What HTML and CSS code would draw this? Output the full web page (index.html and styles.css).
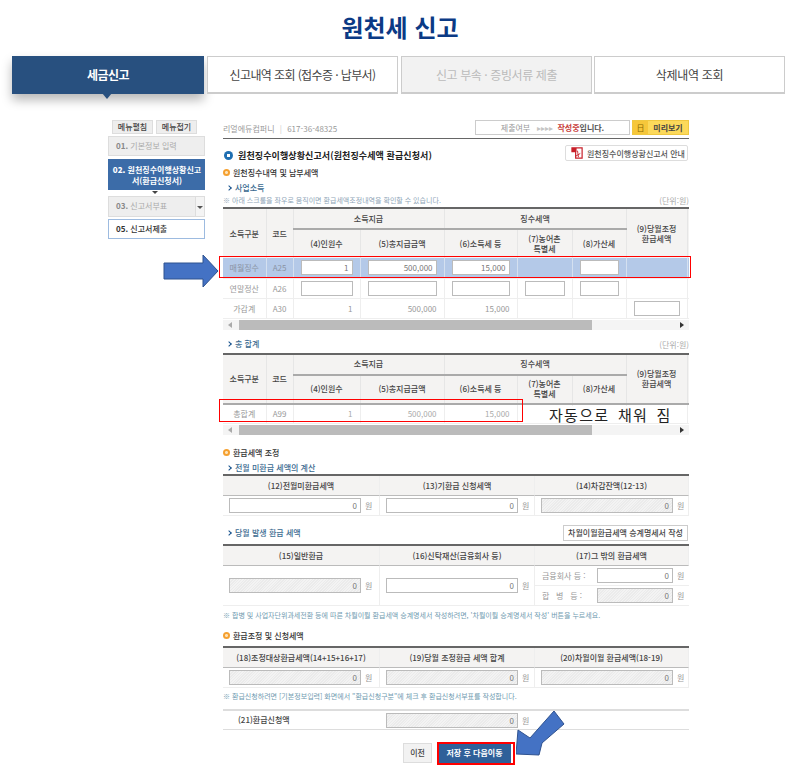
FILE: index.html
```html
<!DOCTYPE html>
<html lang="ko">
<head>
<meta charset="utf-8">
<title>원천세 신고</title>
<link rel="stylesheet" href="styles.css">
</head>
<body>
<div class="page">
  <h1 class="title">원천세 신고</h1>
  <nav class="tabs">
    <a class="tab tab-on">세금신고</a>
    <a class="tab">신고내역 조회 (접수증 · 납부서)</a>
    <a class="tab tab-off">신고 부속 · 증빙서류 제출</a>
    <a class="tab">삭제내역 조회</a>
  </nav>
  <div class="main">
    <aside class="side">
      <div class="side-btns"><span class="side-btn">메뉴펼침</span><span class="side-btn">메뉴접기</span></div>
      <div class="step"><b>01.</b> 기본정보 입력</div>
      <div class="step step-on"><b>02.</b> 원천징수이행상황신고서(환급신청서)</div>
      <div class="caret"></div>
      <div class="step-row"><div class="step step-grow"><b>03.</b> 신고서부표</div><span class="step-drop"></span></div>
      <div class="step step-white"><b>05.</b> 신고서제출</div>
    </aside>
    <section class="content">
      <div class="topbar">
        <span class="company">리얼에듀컴퍼니 <i>|</i> 617-36-48325</span>
        <span class="status">제출여부 &nbsp; <u>▸▸▸▸</u> &nbsp;<em>작성중</em><b>입니다.</b></span>
        <span class="preview"><span class="preview-ic">日</span><span class="preview-tx">미리보기</span></span>
      </div>
      <div class="form-head">
        <h2 class="form-title"><span class="dot-blue"></span>원천징수이행상황신고서(원천징수세액 환급신청서)</h2>
        <span class="guide">
          <svg class="pdf" viewBox="0 0 14 13"><path d="M1 1h11v11H5V5H1z" fill="#fff" stroke="#c8202a" stroke-width="1.3"/><path d="M1 1h5v4H1z" fill="#c8202a"/><path d="M7 4l1 7M5 10l5-3" stroke="#c8202a" fill="none"/></svg>
          원천징수이행상황신고서 안내</span>
      </div>
      <h3 class="h-orange sec1"><span class="dot-orange"></span>원천징수내역 및 납부세액</h3>
      <h4 class="h-sub">사업소득</h4>
      <div class="note-row"><p class="note">※ 아래 스크롤을 좌우로 움직이면 환급세액조정내역을 확인할 수 있습니다.</p><span class="unit">(단위:원)</span></div>

      <div class="tbl-wrap">
        <table class="grid">
          <colgroup><col class="c1"><col class="c2"><col class="c3"><col class="c4"><col class="c5"><col class="c6"><col class="c7"><col class="c8"><col class="c9"></colgroup>
          <thead>
            <tr class="h1"><th rowspan="2">소득구분</th><th rowspan="2">코드</th><th colspan="2" class="line">소득지급</th><th colspan="3" class="line">징수세액</th><th rowspan="2">(9)당월조정<br>환급세액</th><th rowspan="2"></th></tr>
            <tr class="h2"><th>(4)인원수</th><th>(5)총지급금액</th><th>(6)소득세 등</th><th>(7)농어촌<br>특별세</th><th>(8)가산세</th></tr>
          </thead>
          <tbody>
            <tr class="r sel"><td class="c">매월징수</td><td class="c">A25</td><td><input class="in" value="1"></td><td><input class="in" value="500,000"></td><td><input class="in" value="15,000"></td><td></td><td><input class="in"></td><td></td><td class="sl"></td></tr>
            <tr class="r"><td class="c">연말정산</td><td class="c">A26</td><td><input class="in"></td><td><input class="in"></td><td><input class="in"></td><td><input class="in"></td><td><input class="in"></td><td></td><td class="sl"></td></tr>
            <tr class="r"><td class="c">가감계</td><td class="c">A30</td><td class="n">1</td><td class="n">500,000</td><td class="n">15,000</td><td></td><td></td><td><input class="in"></td><td class="sl"></td></tr>
          </tbody>
        </table>
        <div class="sbar"><span class="sb-l"></span><span class="thumb"></span><span class="sb-r"></span></div>
      </div>

      <div class="note-row row-total"><h4 class="h-sub flush">총 합계</h4><span class="unit">(단위:원)</span></div>
      <div class="tbl-wrap">
        <table class="grid">
          <colgroup><col class="c1"><col class="c2"><col class="c3"><col class="c4"><col class="c5"><col class="c6"><col class="c7"><col class="c8"><col class="c9"></colgroup>
          <thead>
            <tr class="h1"><th rowspan="2">소득구분</th><th rowspan="2">코드</th><th colspan="2" class="line">소득지급</th><th colspan="3" class="line">징수세액</th><th rowspan="2">(9)당월조정<br>환급세액</th><th rowspan="2"></th></tr>
            <tr class="h2"><th>(4)인원수</th><th>(5)총지급금액</th><th>(6)소득세 등</th><th>(7)농어촌<br>특별세</th><th>(8)가산세</th></tr>
          </thead>
          <tbody>
            <tr class="r total"><td class="c">총합계</td><td class="c">A99</td><td class="n">1</td><td class="n">500,000</td><td class="n">15,000</td><td></td><td></td><td></td><td class="sl"></td></tr>
          </tbody>
        </table>
        <div class="sbar"><span class="sb-l"></span><span class="thumb"></span><span class="sb-r"></span></div>
      </div>

      <h3 class="h-orange sec2"><span class="dot-orange"></span>환급세액 조정</h3>
      <h4 class="h-sub">전월 미환급 세액의 계산</h4>
      <div class="t3 gap-a">
        <div class="t3-h">(12)전월미환급세액</div><div class="t3-h">(13)기환급 신청세액</div><div class="t3-h">(14)차감잔액(12-13)</div>
        <div class="t3-c"><input class="amt" value="0"><span class="won">원</span></div>
        <div class="t3-c"><input class="amt" value="0"><span class="won">원</span></div>
        <div class="t3-c"><input class="amt ro" value="0"><span class="won">원</span></div>
      </div>

      <div class="sub-row"><h4 class="h-sub flush">당월 발생 환급 세액</h4><span class="carry">차월이월환급세액 승계명세서 작성</span></div>
      <div class="t3 gap-b">
        <div class="t3-h">(15)일반환급</div><div class="t3-h">(16)신탁재산(금융회사 등)</div><div class="t3-h">(17)그 밖의 환급세액</div>
        <div class="t3-c tall"><input class="amt ro" value="0"><span class="won">원</span></div>
        <div class="t3-c tall"><input class="amt" value="0"><span class="won">원</span></div>
        <div class="t3-split">
          <div class="split-row split-top"><span class="split-l">금융회사 등 :</span><input class="amt amt-s" value="0"><span class="won">원</span></div>
          <div class="split-row"><span class="split-l">합 &nbsp; 병 &nbsp; 등 :</span><input class="amt amt-s ro" value="0"><span class="won">원</span></div>
        </div>
      </div>
      <p class="note note-b">※ 합병 및 사업자단위과세전환 등에 따른 차월이월 환급세액 승계명세서 작성하려면, '차월이월 승계명세서 작성' 버튼을 누르세요.</p>

      <h3 class="h-orange sec3"><span class="dot-orange"></span>환급조정 및 신청세액</h3>
      <div class="t3 gap-c">
        <div class="t3-h">(18)조정대상환급세액(14+15+16+17)</div><div class="t3-h">(19)당월 조정환급 세액 합계</div><div class="t3-h">(20)차월이월 환급세액(18-19)</div>
        <div class="t3-c"><input class="amt ro" value="0"><span class="won">원</span></div>
        <div class="t3-c"><input class="amt ro" value="0"><span class="won">원</span></div>
        <div class="t3-c"><input class="amt ro" value="0"><span class="won">원</span></div>
      </div>
      <p class="note note-b">※ 환급신청하려면 [기본정보입력] 화면에서 "환급신청구분"에 체크 후 환급신청서부표를 작성합니다.</p>
      <div class="t21">
        <div class="t21-l">(21)환급신청액</div>
        <div class="t3-c"><input class="amt ro" value="0"><span class="won">원</span></div>
      </div>
      <div class="actions"><span class="btn-prev">이전</span><span class="btn-next">저장 후 다음이동</span></div>
    </section>
  </div>

  <svg class="arrow-a" viewBox="0 0 56 34"><polygon points="1,9 40,9 40,1 55,17 40,33 40,25 1,25" fill="#4472c4" stroke="#2f528f"/></svg>
  <svg class="arrow-b" viewBox="0 0 52 48"><polygon points="38,1 48,14 26,33 23,45 0,44 2,20 14,28" fill="#4472c4" stroke="#2f528f"/></svg>
  <div class="mark mark-a"></div>
  <div class="mark mark-b"></div>
  <div class="mark mark-c"></div>
  <div class="auto">자동으로 채워 짐</div>
</div>
</body>
</html>
```

FILE: styles.css
```css
* { box-sizing: border-box; }
html, body { margin: 0; padding: 0; background: #fff; }
body { font-family: "Noto Sans CJK KR", "Noto Sans", sans-serif; color: #444; font-size: 8px; }
.page { position: relative; width: 800px; height: 779px; overflow: hidden; }

.title { margin: 0; padding-top: 10px; height: 56px; text-align: center; font-size: 24px; line-height: 34px; font-weight: 700; color: #0b3a85; }

.tabs { display: flex; padding-left: 12px; height: 38px; gap: 3px; }
.tab { position: relative; width: 191px; height: 38px; border: 1px solid #ccc; border-bottom-width: 2px; background: #fff; display: flex; align-items: center; justify-content: center; font-size: 12px; color: #444; letter-spacing: -0.6px; }
.tab-on { background: #28507f; border-color: #28507f; color: #fff; font-weight: 700; box-shadow: 0 6px 10px rgba(0,0,0,.28); width: 192px; }
.tab-on::after { content: ""; position: absolute; left: 89px; top: 36px; border: 5px solid transparent; border-top: 6px solid #28507f; }
.tab-off { background: #f2f2f2; color: #bbb; letter-spacing: -0.4px; }
.tabs .tab:last-child { margin-left: -1px; letter-spacing: -0.3px; }

.main { display: flex; padding-left: 108px; margin-top: 26px; }
.side { width: 97px; display: flex; flex-direction: column; }
.side-btns { display: flex; gap: 3px; padding-left: 4px; height: 14px; margin-bottom: 2px; }
.side-btn { width: 41px; background: #eee; border: 1px solid #ddd; font-size: 8px; line-height: 12px; text-align: center; color: #444; font-weight: 500; }
.step { min-height: 20px; background: #eee; border: 1px solid #ddd; color: #aaa; font-size: 8px; line-height: 18px; padding-left: 7px; }
.step b { color: #888; }
.step-on { background: #3c6ca8; border-color: #3c6ca8; color: #fff; margin-top: 3px; min-height: 30px; line-height: 11px; padding: 4px 0 3px 1px; text-align: center; font-weight: 700; }
.step-on b { color: #fff; }
.caret { height: 6px; position: relative; }
.caret::after { content: ""; position: absolute; left: 44px; top: 1px; border: 3px solid transparent; border-top: 3px solid #444; }
.step-row { display: flex; height: 21px; }
.step-grow { flex: 1; min-height: 21px; }
.step-drop { width: 9px; position: relative; background: #f4f4f4; border: 1px solid #ddd; border-left: 0; }
.step-drop::after { content: ""; position: absolute; left: 1px; top: 9px; border: 3px solid transparent; border-top: 3px solid #555; }
.step-white { margin-top: 2px; background: #fff; border: 1px solid #9dbbe0; color: #333; font-weight: 500; }
.step-white b { color: #333; }

.content { width: 466px; margin-left: 18px; }
.topbar { display: flex; align-items: flex-start; height: 19px; border-bottom: 1px solid #666; }
.company { flex: 1; color: #999; font-size: 8px; line-height: 18px; }
.company i { font-style: normal; color: #ccc; margin: 0 3px; }
.status { width: 155px; height: 15px; border: 1px solid #ccc; text-align: center; line-height: 13px; color: #999; font-size: 8px; }
.status u { text-decoration: none; color: #c4c4c4; }
.status em { font-style: normal; font-weight: 700; color: #c8403c; }
.status b { color: #555; }
.preview { margin-left: 2px; width: 57px; height: 15px; display: flex; background: #fcd95a; border: 1px solid #f0c840; font-size: 8px; font-weight: 700; line-height: 13px; color: #444; }
.preview-ic { width: 15px; background: #f6c73a; text-align: center; color: #8a6a00; font-weight: 400; }
.preview-tx { flex: 1; text-align: center; }

.form-head { display: flex; justify-content: space-between; align-items: flex-start; padding-top: 6px; height: 28px; }
.form-title { display: flex; align-items: center; margin: 0; margin-top: 3px; height: 14px; font-size: 9px; font-weight: 700; color: #222; letter-spacing: .1px; }
.dot-blue { width: 9px; height: 9px; border-radius: 50%; background: radial-gradient(circle, #fff 0 1.5px, #1f6fb2 2px); margin: 0 5px 0 1px; }
.guide { display: flex; align-items: center; gap: 3px; margin-right: 1px; width: 123px; height: 16px; border: 1px solid #ddd; border-radius: 2px; padding-left: 5px; font-size: 8px; color: #555; font-weight: 500; white-space: nowrap; }
.pdf { width: 13px; height: 12px; flex: none; }

.h-orange { display: flex; align-items: center; margin: 0; font-size: 8px; font-weight: 500; color: #333; height: 12px; line-height: 12px; }
.dot-orange { width: 7px; height: 7px; border-radius: 50%; background: radial-gradient(circle, #fde3b8 0 1px, #f5a030 2px); margin-right: 3px; margin-top: -2px; }
.sec1 { margin-top: 0; }
.sec2 { margin-top: 12px; }
.sec3 { margin-top: 9px; }
.h-sub { display: flex; align-items: center; margin: 3px 0 0 0; padding-left: 4px; font-size: 8px; font-weight: 500; color: #3a6a90; height: 12px; line-height: 12px; }
.h-sub::before { content: ""; width: 3px; height: 3px; border-top: 1.5px solid #14508c; border-right: 1.5px solid #14508c; transform: rotate(45deg); margin-right: 4px; }
.flush { margin-top: 0; }
.note-row { display: flex; justify-content: space-between; height: 13px; line-height: 13px; }
.note { margin: 0; font-size: 7px; color: #8fa6b8; white-space: nowrap; }
.unit { font-size: 8px; color: #aaa; }
.row-total { height: 15px; margin-top: 8px; align-items: flex-start; }

.tbl-wrap { width: 466px; overflow: hidden; }
.grid { table-layout: fixed; border-collapse: collapse; width: 466px; border-top: 2px solid #666; }
.c1 { width: 43px; } .c2 { width: 27px; } .c3 { width: 67px; } .c4 { width: 84px; } .c5 { width: 73px; }
.c6 { width: 55px; } .c7 { width: 54px; } .c8 { width: 61px; } .c9 { width: 2px; }
.grid th { background: #f4f3f2; font-size: 8px; font-weight: 500; color: #444; line-height: 10px; padding: 0; border-right: 1px solid #e6e6e6; }
.h1 { height: 21px; }
.h2 { height: 29px; }
.line { border-bottom: 2px solid #aaa; }
.r { height: 20px; }
.r td { border-right: 1px solid #eee; border-bottom: 1px solid #eee; padding: 0 7px; font-size: 8px; color: #999; }
.r .sl { padding: 0; }
.r .c { text-align: center; padding: 0; color: #999; }
.r .n { text-align: right; }
.sel td { background: #b4c9e8; color: #8a93a4; border-right-color: #d4e0f0; }
.sel .c { color: #8a93a4; }
.total td { border-top: 2px solid #aaa; color: #aaa; }
.in { display: block; width: 100%; height: 15px; border: 1px solid #bbb; background: #fff; font: 8px "Noto Sans CJK KR", sans-serif; color: #777; text-align: right; padding: 0 3px; outline: 0; }
.sbar { display: flex; align-items: center; height: 10px; margin-top: 1px; background: #f4f4f4; }
.sb-l, .sb-r { width: 16px; height: 10px; position: relative; }
.sb-l::after { content: ""; position: absolute; left: 5px; top: 2px; border: 3px solid transparent; border-right: 4px solid #aaa; border-left: 0; }
.sb-r { margin-left: auto; }
.sb-r::after { content: ""; position: absolute; left: 7px; top: 2px; border: 3px solid transparent; border-left: 4px solid #333; border-right: 0; }
.thumb { width: 353px; height: 10px; background: #bbb; }

.t3 { display: grid; grid-template-columns: 157px 155px 154px; border-top: 2px solid #666; width: 466px; }
.gap-a { margin-top: 0; }
.gap-b { margin-top: 3px; }
.gap-c { margin-top: 4px; }
.t3-h { height: 20px; background: #f4f3f2; border-bottom: 1px solid #bbb; border-right: 1px solid #eee; text-align: center; font-size: 8px; font-weight: 500; color: #444; line-height: 19px; white-space: nowrap; }
.t3-c { display: flex; align-items: center; height: 20px; border-bottom: 1px solid #eee; border-right: 1px solid #eee; padding-left: 6px; }
.tall { height: 40px; }
.amt { width: 132px; height: 15px; border: 1px solid #bbb; background: #fff; font: 8px "Noto Sans CJK KR", sans-serif; color: #777; text-align: right; padding: 0 3px; outline: 0; }
.ro { background: repeating-linear-gradient(135deg, #ebebeb 0 1px, #f3f3f3 1px 2px); }
.won { margin-left: 4px; font-size: 8px; color: #999; }
.t3-split { display: flex; flex-direction: column; height: 40px; border-bottom: 1px solid #eee; }
.split-row { flex: 1; display: flex; align-items: center; padding-left: 7px; }
.split-top { border-bottom: 1px solid #eee; }
.split-l { width: 55px; font-size: 8px; color: #999; white-space: pre; }
.amt-s { width: 76px; }
.sub-row { display: flex; justify-content: space-between; align-items: center; height: 16px; margin-top: 9px; }
.carry { width: 125px; height: 16px; margin-right: 1px; border: 1px solid #ccc; text-align: center; font-size: 8px; font-weight: 500; line-height: 14px; color: #444; white-space: nowrap; }
.note-b { height: 12px; line-height: 12px; margin-top: 2px; color: #6f9ab0; }
.gap-b + .note-b { margin-top: 3px; }
.t21 { display: grid; grid-template-columns: 157px 155px; margin-top: 7px; width: 466px; height: 18px; border-top: 2px solid #ddd; border-bottom: 1px solid #ddd; box-sizing: content-box; }
.t21-l { font-size: 8px; font-weight: 500; color: #444; line-height: 18px; padding-left: 15px; }
.t21 .t3-c { border: 0; height: 18px; }
.actions { display: flex; justify-content: center; gap: 6px; margin-top: 13px; padding-left: 2px; }
.btn-prev { width: 29px; height: 20px; background: #f2f2f2; border: 1px solid #ddd; text-align: center; font-size: 8px; font-weight: 500; line-height: 18px; color: #444; }
.btn-next { width: 73px; height: 20px; background: #2f6099; text-align: center; font-size: 8px; font-weight: 700; line-height: 19px; color: #fff; }

.arrow-a { position: absolute; left: 163px; top: 254px; width: 56px; height: 34px; }
.arrow-b { position: absolute; left: 516px; top: 710px; width: 52px; height: 48px; }
.mark { position: absolute; border: 2px solid #f00; }
.mark-a { left: 219px; top: 256px; width: 472px; height: 22px; border-width: 1.5px; }
.mark-b { left: 219px; top: 399px; width: 304px; height: 23px; border-width: 1.5px; }
.mark-c { left: 437px; top: 742px; width: 78px; height: 23px; }
.auto { position: absolute; left: 549px; top: 406px; font-size: 15px; line-height: 17px; color: #222; letter-spacing: 1.3px; word-spacing: 3px; white-space: nowrap; background: #fff; }
```
